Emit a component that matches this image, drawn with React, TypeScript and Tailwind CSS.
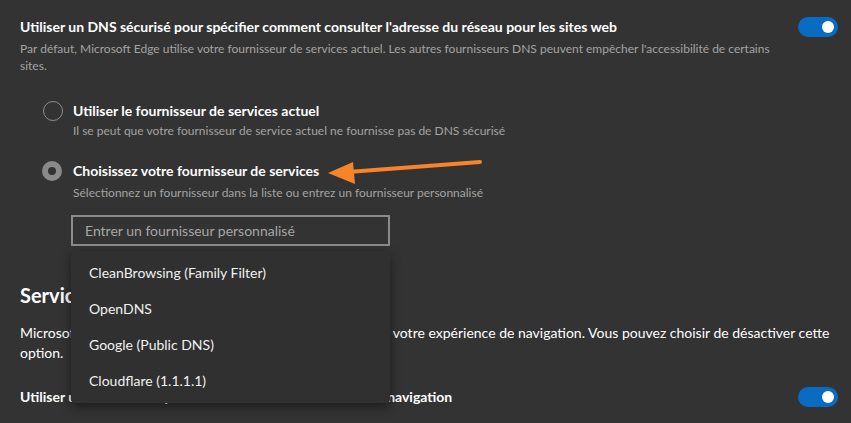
export default function App() {
  return (
    <div
      className="relative min-h-screen overflow-hidden bg-[#333333] pl-5 pr-[13px] pt-[17px] text-white"
      style={{ fontFamily: 'Lato, "Noto Sans", sans-serif' }}
    >
      {/* DNS setting */}
      <div className="flex items-start justify-between">
        <div className="flex-1 min-w-0 whitespace-nowrap">
          <h2 className="text-sm font-bold leading-5">
            Utiliser un DNS sécurisé pour spécifier comment consulter l'adresse du réseau pour les sites web
          </h2>
          <p className="mt-[3px] text-xs leading-[17px] text-[#a3a3a3]">
            Par défaut, Microsoft Edge utilise votre fournisseur de services actuel. Les autres fournisseurs DNS peuvent empêcher l'accessibilité de certains
            <br />
            sites.
          </p>
        </div>
        <Toggle />
      </div>

      {/* Options */}
      <div className="ml-[23px] mt-[27px]">
        <div className="flex items-start gap-[10px]">
          <span className="h-5 w-5 flex-shrink-0 rounded-full border border-[#8c8c8c]" />
          <div>
            <div className="text-sm font-bold leading-5">Utiliser le fournisseur de services actuel</div>
            <div className="mt-[2px] text-xs leading-4 text-[#a3a3a3]">
              Il se peut que votre fournisseur de service actuel ne fournisse pas de DNS sécurisé
            </div>
          </div>
        </div>

        <div className="mt-[22px] flex items-start gap-[11px]">
          <span className="-ml-[1px] h-5 w-5 flex-shrink-0 rounded-full border-[6px] border-[#8a8a8a] bg-[#333333]" />
          <div>
            <div className="text-sm font-bold leading-5">Choisissez votre fournisseur de services</div>
            <div className="mt-[4px] text-xs leading-4 text-[#a3a3a3]">
              Sélectionnez un fournisseur dans la liste ou entrez un fournisseur personnalisé
            </div>
          </div>
        </div>

        <div className="relative ml-[28px] mt-[14px] w-[319px]">
          <div className="flex h-[31px] items-center border-2 border-[#8b8b8b] px-3 text-sm text-[#a6a6a6]">
            Entrer un fournisseur personnalisé
          </div>
          <ul className="absolute left-0 top-[36px] z-10 w-[319px] rounded-sm bg-[#303030] py-1 shadow-[0_4px_12px_rgba(0,0,0,0.45)]">
            {["CleanBrowsing (Family Filter)", "OpenDNS", "Google (Public DNS)", "Cloudflare (1.1.1.1)"].map((item) => (
              <li key={item} className="flex h-9 items-center px-[18px] text-sm text-[#f0f0f0]">
                {item}
              </li>
            ))}
          </ul>
        </div>
      </div>

      {/* Services */}
      <h2 className="mt-[35px] text-xl font-bold leading-7">Services</h2>
      <p className="mt-[14px] whitespace-nowrap text-sm leading-5">
        Microsoft Edge peut utiliser des services web pour améliorer votre expérience de navigation. Vous pouvez choisir de désactiver cette
        <br />
        option.
      </p>
      <div className="mt-[24px] flex items-center justify-between">
        <div className="text-sm font-bold leading-5">
          Utiliser un service web pour aider à résoudre les erreurs de navigation
        </div>
        <Toggle />
      </div>

      {/* Annotation arrow */}
      <svg className="pointer-events-none absolute left-0 top-0 z-20" width="851" height="423">
        <line x1="480" y1="162" x2="348" y2="172" stroke="#f7842a" strokeWidth="4" strokeLinecap="round" />
        <polygon points="328,173 353,162 355,184" fill="#f7842a" />
      </svg>
    </div>
  );
}

function Toggle() {
  return (
    <div className="ml-4 flex h-5 w-10 flex-shrink-0 items-center justify-end rounded-full bg-[#0a6bc2] pr-1">
      <span className="h-3 w-3 rounded-full bg-white" />
    </div>
  );
}
